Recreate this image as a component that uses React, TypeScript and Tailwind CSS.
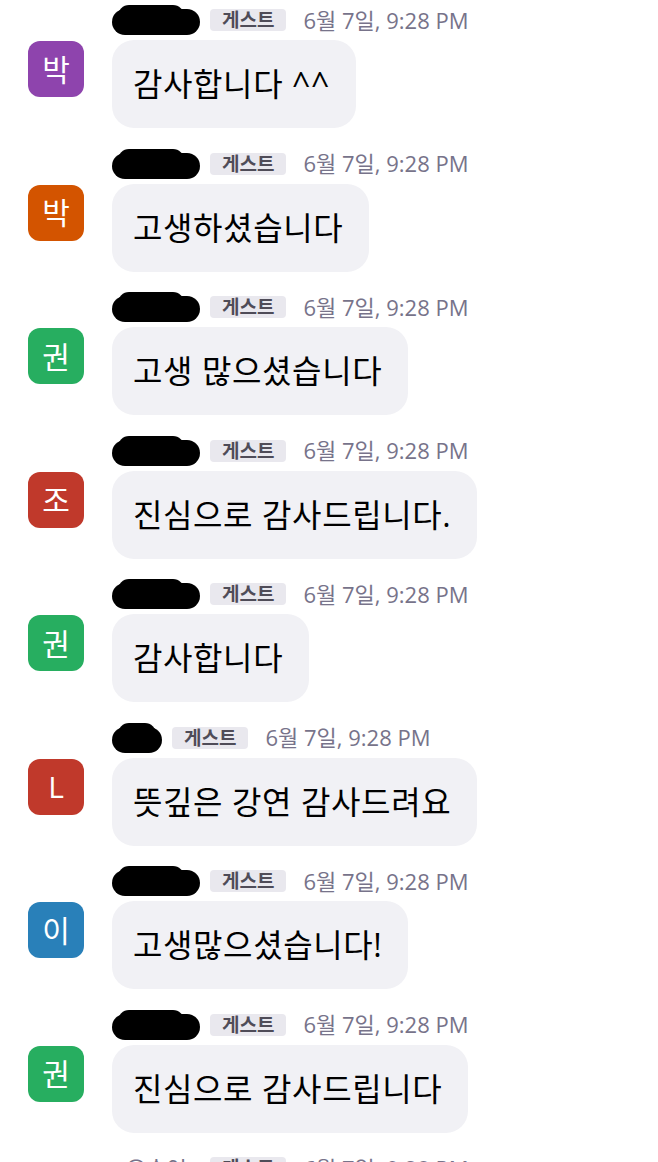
import React from "react";

type Msg = {
  initial: string;
  color: string;
  text: string;
  blobW: number;
};

const msgs: Msg[] = [
  { initial: "박", color: "bg-[#8e44ad]", text: "감사합니다 ^^", blobW: 88 },
  { initial: "박", color: "bg-[#d35400]", text: "고생하셨습니다", blobW: 88 },
  { initial: "권", color: "bg-[#27ae60]", text: "고생 많으셨습니다", blobW: 88 },
  { initial: "조", color: "bg-[#c0392b]", text: "진심으로 감사드립니다.", blobW: 88 },
  { initial: "권", color: "bg-[#27ae60]", text: "감사합니다", blobW: 88 },
  { initial: "L", color: "bg-[#c0392b]", text: "뜻깊은 강연 감사드려요", blobW: 50 },
  { initial: "이", color: "bg-[#2980b9]", text: "고생많으셨습니다!", blobW: 88 },
  { initial: "권", color: "bg-[#27ae60]", text: "진심으로 감사드립니다", blobW: 88 },
];

const font = { fontFamily: '"Open Sans", "Noto Sans CJK KR", sans-serif' };

function Header({ blobW, name }: { blobW: number; name?: string }) {
  return (
    <div className="flex items-center h-10 pl-[112px]">
      {name ? (
        <span className="w-[88px] mr-[10px] pl-[14px] text-[22px] text-[#77738a]">{name}</span>
      ) : (
        <div className="relative mr-[10px] h-[30px]" style={{ width: blobW }}>
          <div className="absolute left-0 top-[4px] h-[26px] w-full rounded-full bg-black" />
          <div className="absolute left-[6px] top-0 h-[22px] w-[75%] rounded-full bg-black" />
        </div>
      )}
      <span className="rounded-[4px] bg-[#e9e8ee] px-[12px] h-[22px] leading-[22px] text-[19px] font-bold text-[#4f4c58]">
        게스트
      </span>
      <span className="ml-[17px] text-[22px] text-[#77738a]">6월 7일, 9:28 PM</span>
    </div>
  );
}

export default function App() {
  return (
    <div className="h-[1162px] overflow-hidden bg-white" style={font}>
      {msgs.map((m, i) => (
        <div key={i} className="mb-[15.5px]">
          <Header blobW={m.blobW} />
          <div className="flex items-start">
            <div
              className={`ml-[28px] mt-[1px] flex h-[56px] w-[56px] items-center justify-center rounded-[12px] text-[30px] text-white ${m.color}`}
            >
              {m.initial}
            </div>
            <div className="ml-[28px] flex h-[88px] items-center rounded-[22px] bg-[#f1f1f5] pl-[21px] pr-[26px] text-[32px] tracking-[0.6px] text-black">
              {m.text}
            </div>
          </div>
        </div>
      ))}
      <Header blobW={0} name="우승연" />
    </div>
  );
}
